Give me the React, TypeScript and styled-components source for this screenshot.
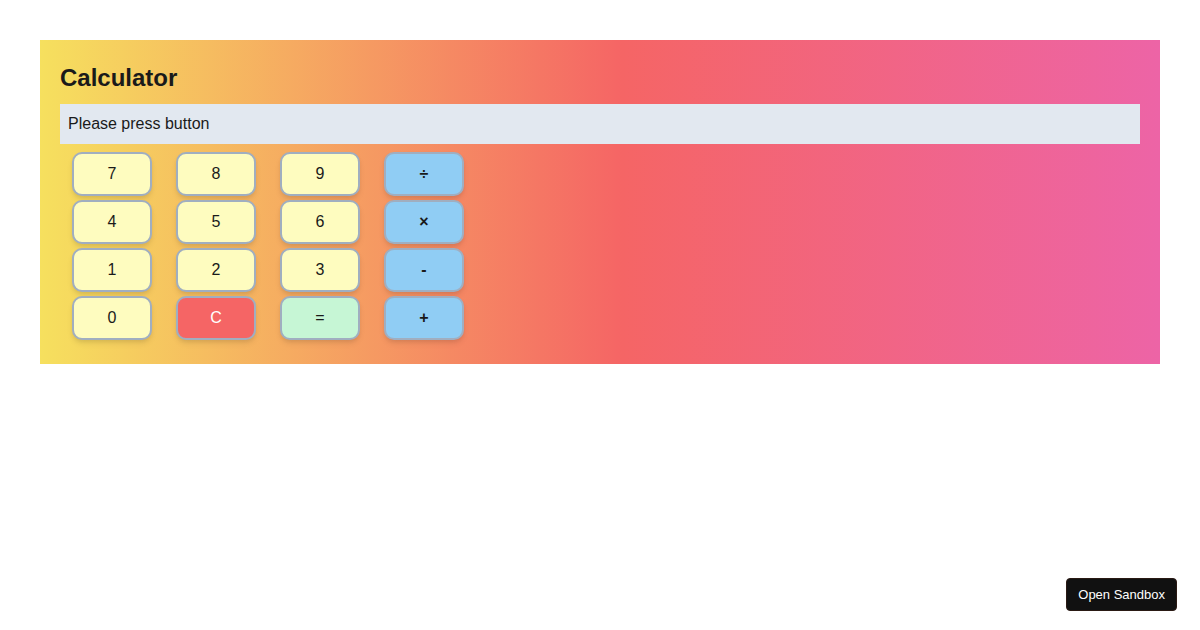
import React from "react";
import styled, { createGlobalStyle } from "styled-components";

const GlobalStyle = createGlobalStyle`
  html, body {
    margin: 0;
    padding: 0;
    background: #ffffff;
    font-family: "Liberation Sans", Arial, sans-serif;
    color: #1a202c;
  }
`;

const Page = styled.div`
  padding: 40px;
  min-height: 630px;
  box-sizing: border-box;
`;

const Panel = styled.div`
  padding: 20px 20px 22px;
  background: linear-gradient(to right, #f6e05e 0%, #f56565 52%, #ed64a6 100%);
`;

const Title = styled.h1`
  margin: 0;
  font-size: 24px;
  line-height: 36px;
  font-weight: 700;
  color: #1a1a1a;
`;

const Display = styled.div`
  margin-top: 8px;
  height: 40px;
  display: flex;
  align-items: center;
  padding: 0 8px;
  background: #e2e8f0;
  font-size: 16px;
  color: #1a1a1a;
`;

const Keypad = styled.div`
  margin-top: 6px;
  display: grid;
  grid-template-columns: repeat(4, 104px);
`;

type Kind = "digit" | "op" | "clear" | "equals";

const colors: Record<Kind, string> = {
  digit: "#fefcbf",
  op: "#90cdf4",
  clear: "#f56565",
  equals: "#c6f6d5",
};

const Key = styled.button<{ $kind: Kind }>`
  margin: 2px 12px;
  height: 44px;
  border: 2px solid #a0aec0;
  border-radius: 10px;
  background: ${(p) => colors[p.$kind]};
  color: ${(p) => (p.$kind === "clear" ? "#ffffff" : "#1a1a1a")};
  font-family: "Liberation Sans", Arial, sans-serif;
  font-size: 16px;
  font-weight: ${(p) => (p.$kind === "op" ? 700 : 400)};
  box-shadow: 0 4px 6px -1px rgba(0, 0, 0, 0.1), 0 2px 4px -1px rgba(0, 0, 0, 0.06);
  cursor: pointer;
  padding: 0;
`;

const SandboxButton = styled.button`
  position: fixed;
  right: 23px;
  bottom: 19px;
  height: 33px;
  padding: 0 11px;
  border: 1px solid #2a1a14;
  border-radius: 4px;
  background: #111111;
  color: #ffffff;
  font-family: "Liberation Sans", Arial, sans-serif;
  font-size: 13px;
`;

const keys: { label: string; kind: Kind }[] = [
  { label: "7", kind: "digit" },
  { label: "8", kind: "digit" },
  { label: "9", kind: "digit" },
  { label: "÷", kind: "op" },
  { label: "4", kind: "digit" },
  { label: "5", kind: "digit" },
  { label: "6", kind: "digit" },
  { label: "×", kind: "op" },
  { label: "1", kind: "digit" },
  { label: "2", kind: "digit" },
  { label: "3", kind: "digit" },
  { label: "-", kind: "op" },
  { label: "0", kind: "digit" },
  { label: "C", kind: "clear" },
  { label: "=", kind: "equals" },
  { label: "+", kind: "op" },
];

export default function App() {
  const [display, setDisplay] = React.useState("Please press button");

  return (
    <>
      <GlobalStyle />
      <Page>
        <Panel>
          <Title>Calculator</Title>
          <Display>{display}</Display>
          <Keypad>
            {keys.map((k) => (
              <Key
                key={k.label}
                $kind={k.kind}
                onClick={() =>
                  setDisplay(k.kind === "clear" ? "Please press button" : k.label)
                }
              >
                {k.label}
              </Key>
            ))}
          </Keypad>
        </Panel>
      </Page>
      <SandboxButton>Open Sandbox</SandboxButton>
    </>
  );
}
